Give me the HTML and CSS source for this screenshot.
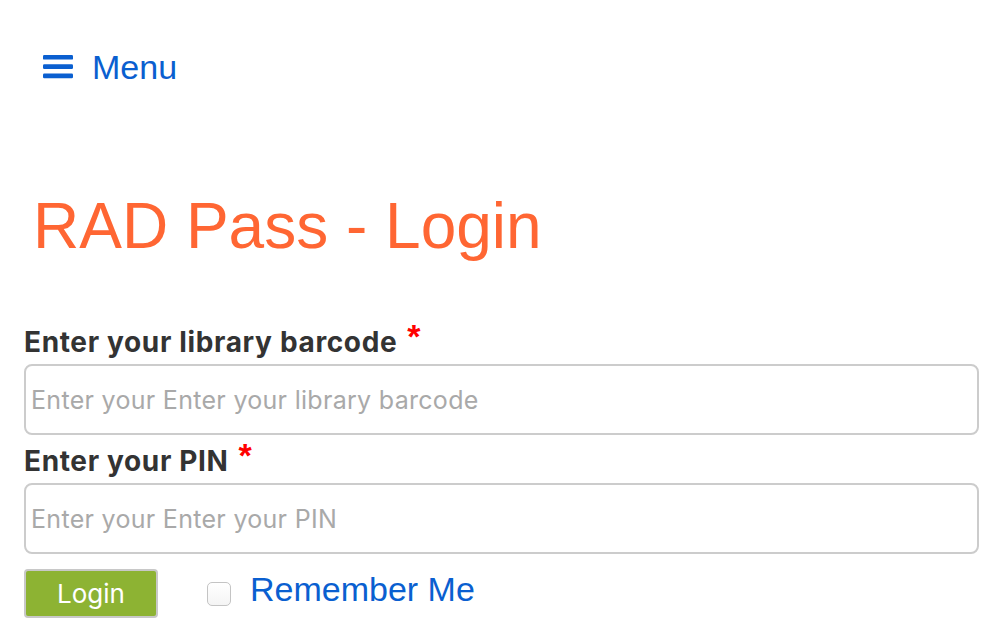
FILE: index.html
```html
<!DOCTYPE html>
<html lang="en">
<head>
<meta charset="utf-8">
<title>RAD Pass - Login</title>
<link rel="stylesheet" href="styles.css">
</head>
<body>
<div class="page">
  <nav class="nav">
    <a class="menu-link" href="#">
      <svg class="menu-icon" width="30" height="24" viewBox="0 0 30 24" aria-hidden="true">
        <rect x="0" y="0" width="30" height="4.6" rx="1.2" fill="#0a5fd0"/>
        <rect x="0" y="9.3" width="30" height="4.6" rx="1.2" fill="#0a5fd0"/>
        <rect x="0" y="18.6" width="30" height="4.6" rx="1.2" fill="#0a5fd0"/>
      </svg>
      <span class="menu-text">Menu</span>
    </a>
  </nav>
  <h1 class="title">RAD Pass - Login</h1>
  <form class="login-form">
    <label class="field-label" for="barcode">Enter your library barcode<span class="req">*</span></label>
    <input class="field-input" id="barcode" type="text" placeholder="Enter your Enter your library barcode">
    <label class="field-label" for="pin">Enter your PIN<span class="req">*</span></label>
    <input class="field-input" id="pin" type="password" placeholder="Enter your Enter your PIN">
    <div class="actions">
      <button class="login-btn" type="button">Login</button>
      <label class="remember">
        <input class="remember-box" type="checkbox">
        <span class="remember-text">Remember Me</span>
      </label>
    </div>
  </form>
</div>
</body>
</html>
```
FILE: styles.css
```css
html, body {
  margin: 0;
  padding: 0;
  background: #ffffff;
}

.page {
  padding: 0 27px 0 24px;
  font-family: "Liberation Sans", Arial, sans-serif;
}

.nav {
  padding: 47px 0 0 19px;
  height: 40px;
}

.menu-link {
  display: flex;
  align-items: center;
  gap: 19px;
  text-decoration: none;
  color: #0a5fd0;
  height: 40px;
}

.menu-icon {
  display: block;
  margin-top: 0;
}

.menu-text {
  font-size: 34px;
  line-height: 40px;
}

.title {
  margin: 103px 0 0 9px;
  font-size: 64px;
  line-height: 72px;
  font-weight: normal;
  color: #ff6633;
}

.login-form {
  display: flex;
  flex-direction: column;
  margin-top: 57px;
}

.field-label {
  font-family: Inter, "Liberation Sans", sans-serif;
  font-weight: bold;
  font-size: 28px;
  line-height: 34px;
  color: #333333;
  letter-spacing: 0.65px;
}

.req {
  font-family: "Liberation Sans", Arial, sans-serif;
  color: #ff0000;
  margin-left: 10px;
  vertical-align: 4px;
  font-size: 34px;
  line-height: 1;
}

.field-input {
  box-sizing: border-box;
  height: 71px;
  margin: 5px 0 3px;
  padding: 0 5px;
  border: 2px solid #cccccc;
  border-radius: 8px;
  font-family: Inter, "Liberation Sans", sans-serif;
  font-size: 25px;
  letter-spacing: 0.3px;
  color: #333333;
  outline: none;
}

.field-input::placeholder {
  color: #a9a9a9;
}

.actions {
  display: flex;
  align-items: center;
  margin-top: 12px;
}

.login-btn {
  box-sizing: border-box;
  width: 134px;
  height: 49px;
  background: #8db333;
  border: 2px solid #c8c8c8;
  border-radius: 4px;
  color: #ffffff;
  font-family: Inter, "Liberation Sans", sans-serif;
  font-size: 26px;
  padding: 0;
}

.remember {
  display: flex;
  align-items: center;
  margin-left: 49px;
  gap: 19px;
}

.remember-box {
  appearance: none;
  -webkit-appearance: none;
  box-sizing: border-box;
  width: 24px;
  height: 24px;
  margin: 0;
  border: 1px solid #c4c4c4;
  border-radius: 5px;
  background: linear-gradient(#ffffff, #f4f4f4);
}

.remember-text {
  font-family: "Liberation Sans", Arial, sans-serif;
  font-size: 34px;
  color: #0a5fd0;
  margin-top: -8px;
}
```
